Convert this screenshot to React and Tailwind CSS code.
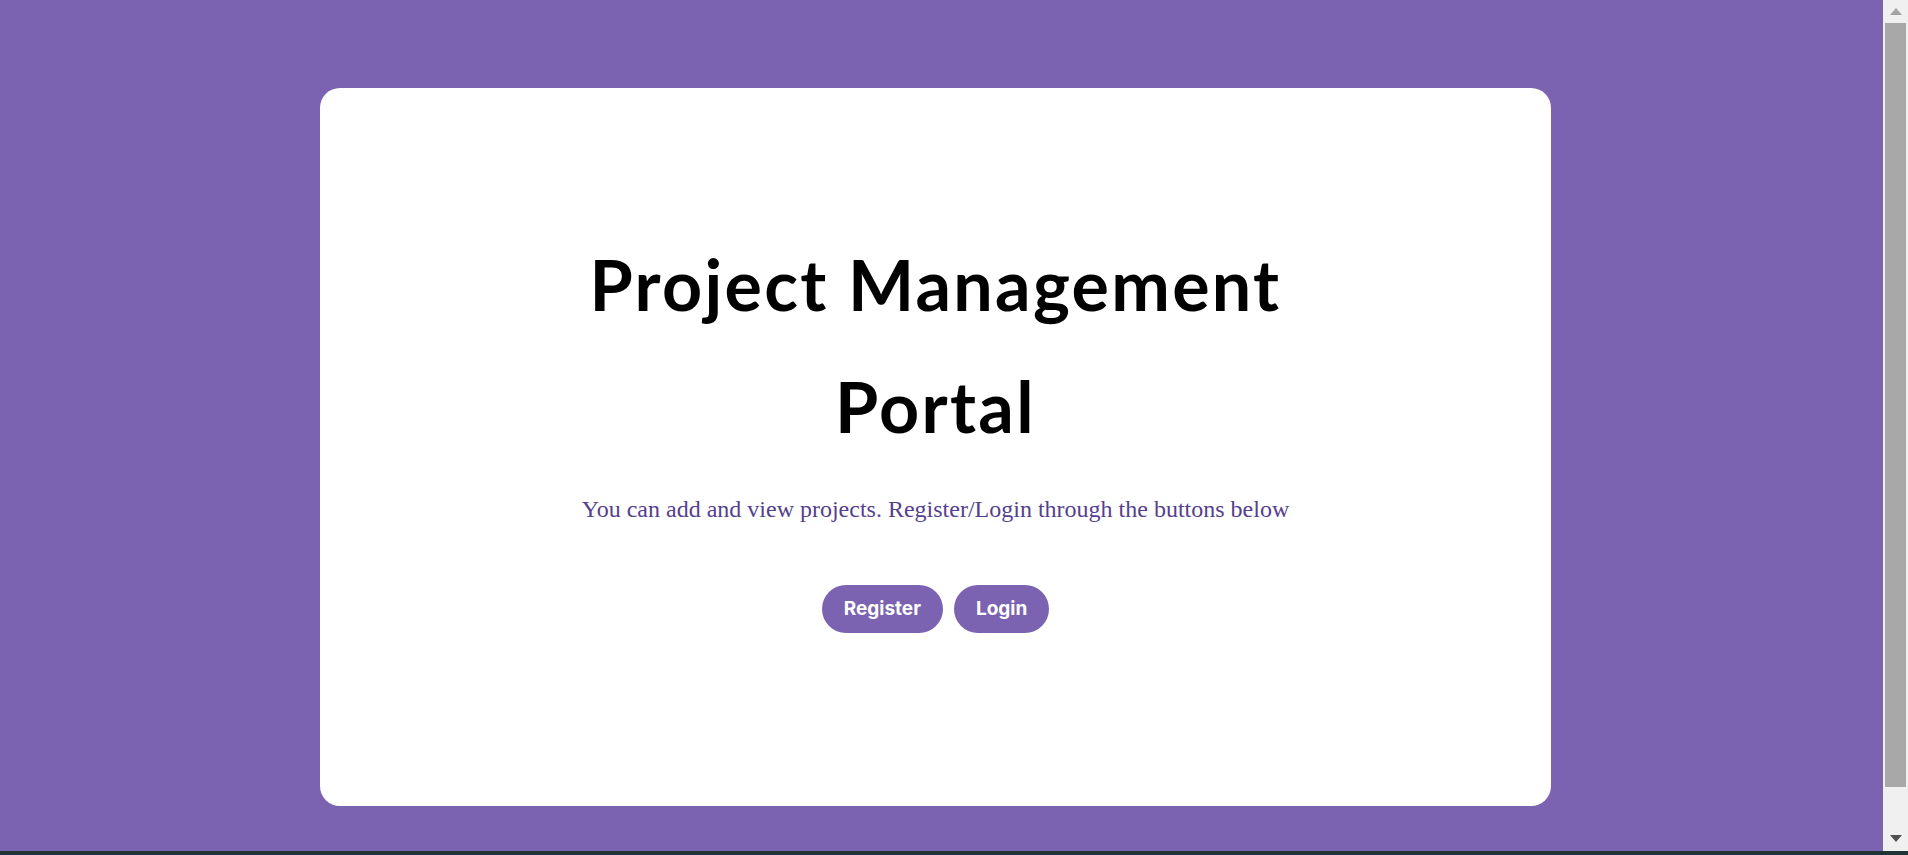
import React from "react";

export default function App() {
  return (
    <div className="flex h-[855px] w-full flex-col overflow-hidden bg-[#7b63b1]">
      <div className="flex min-h-0 flex-1">
        <main className="flex-1 pt-[88px]">
          <div className="ml-[320px] flex h-[718px] w-[1231px] flex-col items-center rounded-[20px] bg-white pt-[135px]">
            <h1
              className="w-[760px] text-center text-[70px] font-bold leading-[122px] tracking-[2.3px] text-black"
              style={{ fontFamily: "Lato, 'Noto Sans', sans-serif" }}
            >
              Project Management Portal
            </h1>
            <p
              className="mt-[24px] text-[24px] text-[#553f8f]"
              style={{ fontFamily: "'Liberation Serif', serif" }}
            >
              You can add and view projects. Register/Login through the buttons below
            </p>
            <div
              className="mt-[58px] flex gap-[11px]"
              style={{ fontFamily: "Inter, 'Liberation Sans', sans-serif" }}
            >
              <button className="h-[48px] rounded-full bg-[#7b63b1] px-[22px] text-[19px] font-bold text-white">
                Register
              </button>
              <button className="h-[48px] rounded-full bg-[#7b63b1] px-[22px] text-[19px] font-bold text-white">
                Login
              </button>
            </div>
          </div>
        </main>
        <div className="flex w-[25px] flex-col bg-[#f0f0f0]">
          <div className="flex h-[23px] items-center justify-center">
            <svg width="12" height="7" viewBox="0 0 12 7">
              <path d="M6 0 L12 7 L0 7 Z" fill="#a3a3a3" />
            </svg>
          </div>
          <div className="mx-[2px] h-[764px] bg-[#a8a8a8]" />
          <div className="flex flex-1 items-end justify-center pb-[9px]">
            <svg width="12" height="7" viewBox="0 0 12 7">
              <path d="M0 0 L12 0 L6 7 Z" fill="#505050" />
            </svg>
          </div>
        </div>
      </div>
      <div className="h-[4px] w-full bg-[#1f3535]" />
    </div>
  );
}
